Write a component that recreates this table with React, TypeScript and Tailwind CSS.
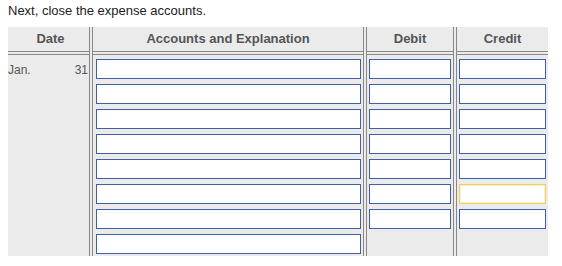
import React from 'react';

const accountRows = 8;
const amountRows = 7;

const inputBase = 'block h-[20px] w-full bg-white border outline-none';

export default function App() {
  const rows = Array.from({ length: accountRows }, (_, i) => i);

  return (
    <div className="w-[562px] h-[266px] bg-white font-['Liberation_Sans',Arial,sans-serif] text-[13px]">
      <p className="pl-[8px] pt-[3px] h-[27px] text-[#222] leading-[16px]">Next, close the expense accounts.</p>

      <div className="ml-[8px] w-[540px] h-[229px] bg-[#ebebeb] flex">
        {/* Date */}
        <div className="w-[81px] flex flex-col">
          <div className="h-[28px] border-b-[4px] border-double border-[#888] flex items-center justify-center font-bold text-[#555] pl-[4px]">
            Date
          </div>
          <div className="flex justify-between pt-[8px] pr-[1px] text-[12px] text-[#555] leading-[14px]">
            <span>Jan.</span>
            <span>31</span>
          </div>
        </div>

        {/* Accounts and Explanation */}
        <div className="w-[274px] border-l-[4px] border-double border-[#888] flex flex-col">
          <div className="h-[28px] border-b-[4px] border-double border-[#888] flex items-center justify-center font-bold text-[#555]">
            Accounts and Explanation
          </div>
          <div className="flex flex-col gap-[5px] pt-[4px] pl-[3px] pr-[2px]">
            {rows.map(i => (
              <input key={i} className={`${inputBase} border-[#3f60a6]`} />
            ))}
          </div>
        </div>

        {/* Debit */}
        <div className="w-[90px] border-l-[4px] border-double border-[#888] flex flex-col">
          <div className="h-[28px] border-b-[4px] border-double border-[#888] flex items-center justify-center font-bold text-[#555]">
            Debit
          </div>
          <div className="flex flex-col gap-[5px] pt-[4px] pl-[2px] pr-[2px]">
            {rows.slice(0, amountRows).map(i => (
              <input key={i} className={`${inputBase} border-[#3f60a6]`} />
            ))}
          </div>
        </div>

        {/* Credit */}
        <div className="flex-1 border-l-[4px] border-double border-[#888] flex flex-col">
          <div className="h-[28px] border-b-[4px] border-double border-[#888] flex items-center justify-center font-bold text-[#555]">
            Credit
          </div>
          <div className="flex flex-col gap-[5px] pt-[4px] pl-[2px] pr-[2px]">
            {rows.slice(0, amountRows).map(i =>
              i === 5 ? (
                <div key={i} className="h-[20px] w-full bg-white border border-[#efd060] shadow-[inset_0_0_0_1px_#fbf0c4]" />
              ) : (
                <input key={i} className={`${inputBase} border-[#3f60a6]`} />
              )
            )}
          </div>
        </div>
      </div>
    </div>
  );
}
